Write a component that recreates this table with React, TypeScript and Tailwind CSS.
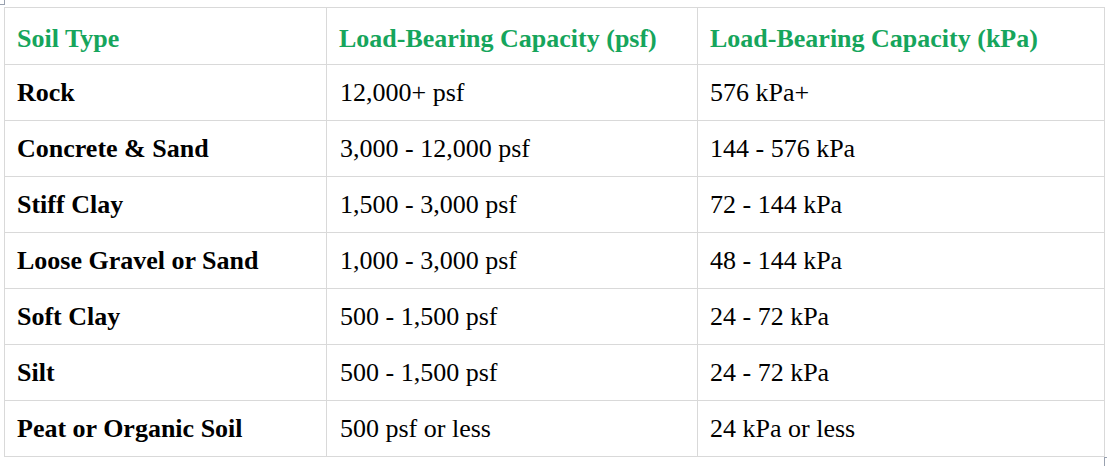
const rows = [
  ['Rock', '12,000+ psf', '576 kPa+'],
  ['Concrete & Sand', '3,000 - 12,000 psf', '144 - 576 kPa'],
  ['Stiff Clay', '1,500 - 3,000 psf', '72 - 144 kPa'],
  ['Loose Gravel or Sand', '1,000 - 3,000 psf', '48 - 144 kPa'],
  ['Soft Clay', '500 - 1,500 psf', '24 - 72 kPa'],
  ['Silt', '500 - 1,500 psf', '24 - 72 kPa'],
  ['Peat or Organic Soil', '500 psf or less', '24 kPa or less'],
]

export default function App() {
  return (
    <div className="relative w-[1107px] h-[466px] bg-white font-['Liberation_Serif',serif] text-[26px] text-black">
      {/* word-style corner marks */}
      <div className="absolute left-0 top-0 w-[5px] h-[5px] border-r border-b border-gray-400" />
      <div className="absolute left-[1104px] top-[457px] w-[3px] h-[9px] border-l border-t border-gray-400" />

      <div className="pt-[7px] pl-[4px]">
        <table className="table-fixed border-collapse w-[1100px]">
          <colgroup>
            <col className="w-[322px]" />
            <col className="w-[371px]" />
            <col className="w-[407px]" />
          </colgroup>
          <thead>
            <tr className="h-[57px]">
              {['Soil Type', 'Load-Bearing Capacity (psf)', 'Load-Bearing Capacity (kPa)'].map(h => (
                <th key={h} className="border border-[#d9d9d9] pl-[12px] pt-[5px] text-left font-bold text-[#16a55c] leading-none">
                  {h}
                </th>
              ))}
            </tr>
          </thead>
          <tbody>
            {rows.map(r => (
              <tr key={r[0]} className="h-[56px]">
                <td className="border border-[#d9d9d9] pl-[12px] pt-[1px] font-bold leading-none">{r[0]}</td>
                <td className="border border-[#d9d9d9] pl-[13px] pt-[1px] leading-none">{r[1]}</td>
                <td className="border border-[#d9d9d9] pl-[12px] pt-[1px] leading-none">{r[2]}</td>
              </tr>
            ))}
          </tbody>
        </table>
      </div>
    </div>
  )
}
